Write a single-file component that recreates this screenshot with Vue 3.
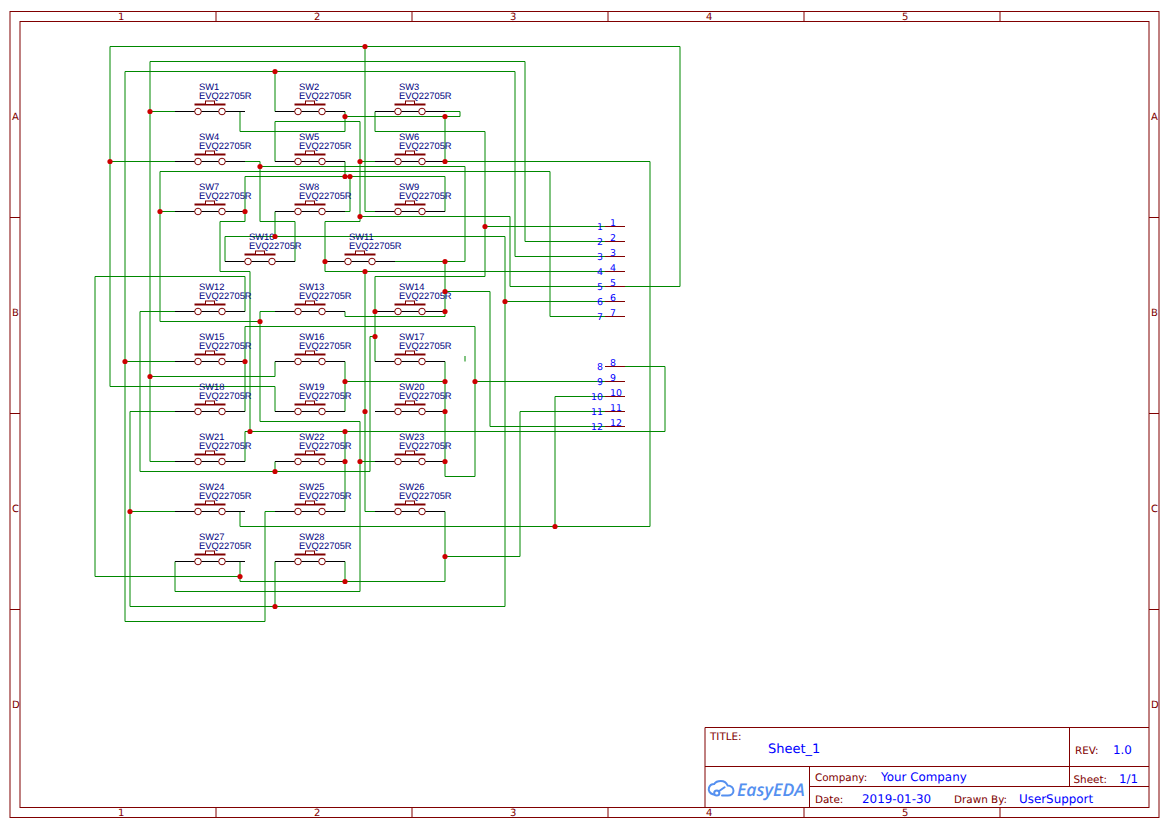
<template>
  <svg class="sheet" width="1169" height="828" viewBox="0 0 1169 828">
    <!-- drawing frame -->
    <g class="frame">
      <rect x="10" y="11.5" width="1149" height="806" />
      <rect x="20" y="21.5" width="1129" height="786" />
      <template v-for="x in ticksX" :key="x">
        <line :x1="x" y1="11.5" :x2="x" y2="21.5" />
        <line :x1="x" y1="807.5" :x2="x" y2="817.5" />
      </template>
      <template v-for="y in ticksY" :key="y">
        <line x1="10" :y1="y" x2="20" :y2="y" />
        <line x1="1149" :y1="y" x2="1159" :y2="y" />
      </template>
    </g>
    <g class="frame-label">
      <template v-for="(n, i) in 5" :key="n">
        <text :x="118 + i * 196" y="19.5">{{ n }}</text>
        <text :x="118 + i * 196" y="815.5">{{ n }}</text>
      </template>
      <template v-for="(l, i) in ['A', 'B', 'C', 'D']" :key="l">
        <text x="12" :y="119.5 + i * 196">{{ l }}</text>
        <text x="1151" :y="119.5 + i * 196">{{ l }}</text>
      </template>
    </g>

    <!-- nets -->
    <g class="wires">
      <polyline v-for="(w, i) in wires" :key="i" :points="w" />
    </g>

    <!-- switches -->
    <g v-for="s in switches" :key="s.name">
      <line class="pin" :x1="s.x - 35" :y1="s.y" :x2="s.x + 35" :y2="s.y" />
      <line class="bar" :x1="s.x - 15.5" :y1="s.y - 7" :x2="s.x + 15.5" :y2="s.y - 7" />
      <rect class="cap" :x="s.x - 4.5" :y="s.y - 10.5" width="9" height="3.5" />
      <circle class="pad" :cx="s.x - 12" :cy="s.y" r="3.3" />
      <circle class="pad" :cx="s.x + 12" :cy="s.y" r="3.3" />
      <text class="ref" :x="s.x - 11" :y="s.y - 21.5">{{ s.name }}</text>
      <text class="ref" :x="s.x - 11" :y="s.y - 13">EVQ22705R</text>
    </g>

    <!-- connector pins -->
    <g v-for="p in pins" :key="p.n">
      <line class="conn" x1="605" :y1="p.y" x2="625" :y2="p.y" />
      <text class="num num-left" x="603" :y="p.y + 3">{{ p.n }}</text>
      <text class="num" x="610" :y="p.y - 1">{{ p.n }}</text>
    </g>

    <g class="dots">
      <circle v-for="(d, i) in dots" :key="i" :cx="d[0]" :cy="d[1]" r="2.6" />
    </g>

    <!-- title block -->
    <g class="frame">
      <line x1="705" y1="727.5" x2="1149" y2="727.5" />
      <line x1="705" y1="727.5" x2="705" y2="807.5" />
      <line x1="705" y1="766.5" x2="1149" y2="766.5" />
      <line x1="809.5" y1="766.5" x2="809.5" y2="807.5" />
      <line x1="809.5" y1="786.5" x2="1149" y2="786.5" />
      <line x1="1069.5" y1="727.5" x2="1069.5" y2="786.5" />
    </g>
    <g class="logo">
      <path d="M713.5 794.5C709.8 793.6 708 790.8 709 787.6 709.8 785.2 712 784 714.2 784 715.6 781.8 718.4 781 720.8 781 724 781 726.6 783 727.6 785.5 731 785.5 733.5 788 733.5 790.8 733.5 793.6 731 795.5 728 795.5L722 795.5" />
      <circle cx="716.8" cy="793" r="2.6" />
      <path d="M718.8 791.2L724.6 787.2" />
    </g>
    <text class="logo-text" x="737" y="796">EasyEDA</text>

    <text class="tb" x="710" y="740">TITLE:</text>
    <text class="val big" x="768" y="753">Sheet_1</text>
    <text class="tb" x="1075" y="754">REV:</text>
    <text class="val mid" x="1113" y="754">1.0</text>
    <text class="tb" x="815" y="781">Company:</text>
    <text class="val mid" x="881" y="781">Your Company</text>
    <text class="tb" x="1073.5" y="782.5">Sheet:</text>
    <text class="val mid" x="1119" y="782.5">1/1</text>
    <text class="tb" x="815" y="802.5">Date:</text>
    <text class="val mid" x="862" y="802.5">2019-01-30</text>
    <text class="tb" x="954" y="802.5">Drawn By:</text>
    <text class="val mid" x="1019" y="802.5">UserSupport</text>
  </svg>
</template>

<script setup>
const ticksX = [216, 412, 608, 804, 1000]
const ticksY = [217.5, 413.5, 609.5]

const layout = [
  [111.5, [210, 310, 410]],
  [161.5, [210, 310, 410]],
  [211.5, [210, 310, 410]],
  [261.5, [260, 360]],
  [311.5, [210, 310, 410]],
  [361.5, [210, 310, 410]],
  [411.5, [210, 310, 410]],
  [461.5, [210, 310, 410]],
  [511.5, [210, 310, 410]],
  [561.5, [210, 310]],
]
const switches = []
for (const [y, xs] of layout) {
  for (const x of xs) switches.push({ name: 'SW' + (switches.length + 1), x, y })
}

const pinYs = [226.5, 241.5, 256.5, 271.5, 286.5, 301.5, 316.5, 366.5, 381.5, 396.5, 411.5, 426.5]
const pins = pinYs.map((y, i) => ({ n: i + 1, y }))

const wires = [
  '110,386.5 110,46.5 680,46.5 680,286.5 510,286.5 510,216.5 360,216.5',
  '110,386.5 275,386.5 275,411.5',
  '365,46.5 365,211.5 375,211.5',
  '110,161.5 175,161.5',
  '150,111.5 175,111.5',
  '175,461.5 150,461.5 150,61.5 525,61.5 525,241.5 605,241.5',
  '150,376.5 275,376.5 275,361.5',
  '275,511.5 265,511.5 265,621.5 125,621.5 125,71.5 515,71.5 515,256.5 605,256.5',
  '275,71.5 275,111.5',
  '125,361.5 175,361.5',
  '175,411.5 130,411.5 130,606.5 505,606.5 505,236.5 225,236.5 225,261.5',
  '130,511.5 175,511.5',
  '275,606.5 275,561.5',
  '505,301.5 605,301.5',
  '175,311.5 140,311.5 140,471.5 370,471.5 370,336.5 375,336.5',
  '275,471.5 275,461.5',
  '375,111.5 375,131.5 485,131.5 485,276.5 375,276.5 375,361.5',
  '485,226.5 605,226.5',
  '275,236.5 275,211.5',
  '360,161.5 375,161.5',
  '275,161.5 275,121.5 360,121.5 360,221.5 325,221.5 325,271.5 605,271.5',
  '365,271.5 365,511.5 375,511.5',
  '360,461.5 375,461.5',
  '175,561.5 175,591.5 360,591.5 360,421.5 260,421.5 260,311.5 275,311.5',
  '260,321.5 160,321.5 160,171.5 550,171.5 550,316.5 605,316.5',
  '160,211.5 175,211.5',
  '245,161.5 260,161.5 260,221.5 295,221.5 295,261.5',
  '260,166.5 465,166.5 465,261.5 395,261.5',
  '245,211.5 245,176.5 445,176.5 445,211.5',
  '245,211.5 245,221.5 220,221.5 220,271.5 250,271.5 250,431.5 665,431.5 665,366.5 625,366.5',
  '250,431.5 245,431.5 245,461.5',
  '345,431.5 345,511.5',
  '345,161.5 345,176.5 350,176.5 350,211.5 345,211.5',
  '240,111.5 240,131.5 345,131.5 345,111.5',
  '345,116.5 460,116.5 460,111.5 445,111.5',
  '445,116.5 445,161.5 650,161.5 650,526.5 240,526.5 240,511.5',
  '555,526.5 555,396.5 605,396.5',
  '445,261.5 445,316.5 345,316.5 345,311.5',
  '445,291.5 490,291.5 490,426.5 605,426.5',
  '245,311.5 245,276.5 95,276.5 95,576.5 240,576.5',
  '240,561.5 240,581.5 445,581.5 445,511.5',
  '345,581.5 345,561.5',
  '445,556.5 520,556.5 520,411.5 605,411.5',
  '245,411.5 245,326.5 475,326.5 475,476.5 445,476.5 445,361.5',
  '475,381.5 605,381.5',
  '345,361.5 345,411.5',
  '345,381.5 445,381.5',
  '465,356 465,361.5',
]

const dots = [
  [365, 46.5], [275, 71.5], [150, 111.5], [345, 116.5], [445, 116.5], [110, 161.5], [260, 166.5],
  [360, 161.5], [445, 161.5], [345, 176.5], [350, 176.5], [160, 211.5], [245, 211.5], [360, 216.5],
  [485, 226.5], [275, 236.5], [325, 261.5], [445, 261.5], [365, 271.5], [445, 291.5], [505, 301.5],
  [375, 311.5], [445, 311.5], [260, 321.5], [375, 336.5], [125, 361.5], [245, 361.5], [150, 376.5],
  [345, 381.5], [445, 381.5], [475, 381.5], [365, 411.5], [445, 411.5], [250, 431.5], [345, 431.5],
  [345, 461.5], [360, 461.5], [445, 461.5], [275, 471.5], [130, 511.5], [555, 526.5], [445, 556.5],
  [240, 576.5], [345, 581.5], [275, 606.5],
]
</script>

<style>
body { background: #fff; }
</style>

<style scoped>
.sheet { display: block; background: #fff; text-rendering: geometricPrecision; }
.frame rect, .frame line { fill: none; stroke: #800000; stroke-width: 1; }
.frame-label text { font: 10px "DejaVu Sans", sans-serif; fill: #800000; }
.wires polyline { fill: none; stroke: #008800; stroke-width: 1; }
.pin { stroke: #000; stroke-width: 1; }
.bar { stroke: #800000; stroke-width: 2; }
.cap { fill: #fff; stroke: #800000; stroke-width: 1; }
.pad { fill: #fff; stroke: #800000; stroke-width: 1; }
.ref { font: 9.4px "Liberation Sans", Arial, sans-serif; fill: #000080; }
.conn { stroke: #800000; stroke-width: 1; }
.num { font: 9.4px "DejaVu Sans", sans-serif; fill: #0000ff; }
.num-left { text-anchor: end; }
.dots circle { fill: #cc0000; }
.logo path, .logo circle { fill: none; stroke: #5590f0; stroke-width: 2; stroke-linecap: round; }
.logo-text { font: italic 600 17.6px "Open Sans", sans-serif; fill: #5590f0; }
.tb { font: 10.4px "DejaVu Sans", sans-serif; fill: #800000; }
.val { font-family: "DejaVu Sans", sans-serif; fill: #0000ff; }
.big { font-size: 13px; }
.mid { font-size: 11.9px; }
</style>
